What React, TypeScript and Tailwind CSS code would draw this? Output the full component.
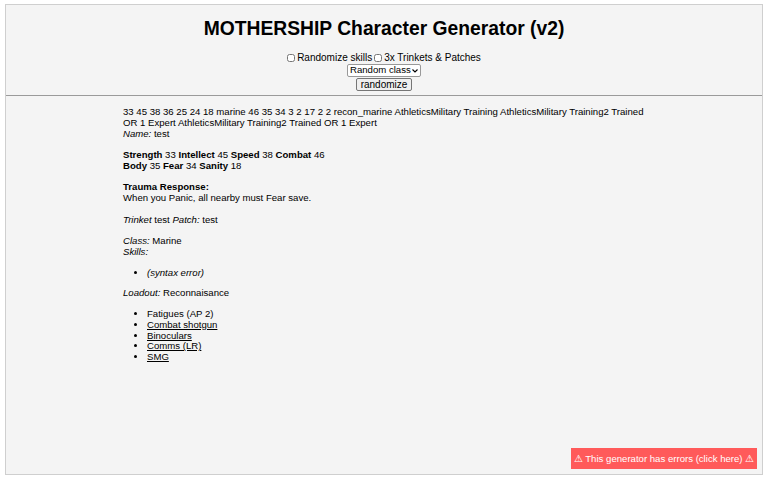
import React from 'react';

const loadout = ['Combat shotgun', 'Binoculars', 'Comms (LR)', 'SMG'];

export default function App() {
    return (
        <div className="w-[768px] h-[480px] bg-white p-[4px_5px_5px_5px] font-['Liberation_Sans',Arial,sans-serif] text-black">
            <div className="h-full border border-[#cfcfcf] bg-[#f4f4f4] flex flex-col">
                <div className="flex flex-col items-center pt-[13px] pb-[4px] border-b border-[#9a9a9a]">
                    <h1 className="text-[19.3px] leading-[22px] font-bold">MOTHERSHIP Character Generator (v2)</h1>
                    <div className="mt-[12px] flex items-center gap-[2px] text-[10px] leading-[12px]">
                        <input type="checkbox" className="w-[8px] h-[8px] m-0" />
                        <span>Randomize skills</span>
                        <input type="checkbox" className="w-[8px] h-[8px] m-0" />
                        <span>3x Trinkets &amp; Patches</span>
                    </div>
                    <div className="flex items-center gap-[1px] h-[13px] w-[74px] border border-[#999] rounded-[2px] bg-white px-[2px]">
                        <select className="appearance-none flex-1 min-w-0 h-[11px] bg-transparent text-[9.6px] leading-[10px] pt-0 pb-[1px] px-0 outline-none">
                            <option>Random class</option>
                        </select>
                        <svg width="6" height="4" viewBox="0 0 6 4" className="shrink-0">
                            <path d="M0.5 0.5 L3 3 L5.5 0.5" fill="none" stroke="#000" strokeWidth="1.1" />
                        </svg>
                    </div>
                    <button className="mt-[1px] h-[13px] px-[4px] text-[10px] leading-[10px] border border-[#767676] rounded-[2px] bg-[#efefef]">randomize</button>
                </div>
                <div className="w-[522px] mx-auto pt-[11px] text-[9.6px] leading-[10.75px]">
                    <div>33 45 38 36 25 24 18 marine 46 35 34 3 2 17 2 2 recon_marine AthleticsMilitary Training AthleticsMilitary Training2 Trained OR 1 Expert AthleticsMilitary Training2 Trained OR 1 Expert</div>
                    <div><i>Name:</i> test</div>
                    <p className="mt-[10.75px]"><b>Strength</b> 33 <b>Intellect</b> 45 <b>Speed</b> 38 <b>Combat</b> 46<br /><b>Body</b> 35 <b>Fear</b> 34 <b>Sanity</b> 18</p>
                    <p className="mt-[10.75px]"><b>Trauma Response:</b><br />When you Panic, all nearby must Fear save.</p>
                    <p className="mt-[10.75px]"><i>Trinket</i> test <i>Patch:</i> test</p>
                    <p className="mt-[10.75px]"><i>Class:</i> Marine<br /><i>Skills:</i></p>
                    <ul className="my-[10px] pl-[24px] list-disc">
                        <li><i>(syntax error)</i></li>
                    </ul>
                    <p><i>Loadout:</i> Reconnaisance</p>
                    <ul className="mt-[10px] pl-[24px] list-disc">
                        <li>Fatigues (AP 2)</li>
                        {loadout.map(item => (
                            <li key={item}><span className="underline">{item}</span></li>
                        ))}
                    </ul>
                </div>
            </div>
            <button className="fixed right-[11px] bottom-[11px] w-[186px] h-[21px] bg-[#ff5a5a] text-white text-[9.6px] leading-[21px] text-center whitespace-nowrap">⚠ This generator has errors (click here) ⚠</button>
        </div>
    );
}
